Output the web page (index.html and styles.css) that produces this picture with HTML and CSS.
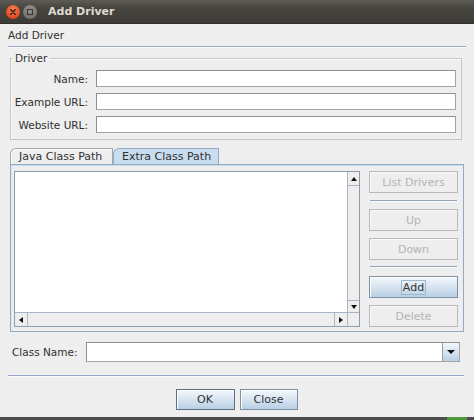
FILE: index.html
```
<!DOCTYPE html>
<html lang="en">
<head>
  <meta charset="UTF-8" />
  <title>Add Driver</title>
  <link rel="stylesheet" href="styles.css">
</head>
<body>

  <div class="window">
    <div class="titlebar">
      <span class="wbtn wbtn-close">
        <svg width="14" height="14" viewBox="0 0 14 14"><path d="M4.8 4.8 L9.2 9.2 M9.2 4.8 L4.8 9.2" stroke="#3b1a10" stroke-width="1.6" stroke-linecap="round"/></svg>
      </span>
      <span class="wbtn wbtn-min">
        <svg width="14" height="14" viewBox="0 0 14 14"><rect x="4.5" y="4.5" width="5" height="5" fill="none" stroke="#3a3936" stroke-width="1.2"/></svg>
      </span>
      <span class="title">Add Driver</span>
    </div>

    <div class="content">
      <div class="heading">Add Driver</div>
      <div class="sep"></div>

      <fieldset class="group">
        <legend>Driver</legend>
        <div class="form-row">
          <label>Name:</label>
          <div class="field"></div>
        </div>
        <div class="form-row">
          <label>Example URL:</label>
          <div class="field"></div>
        </div>
        <div class="form-row">
          <label>Website URL:</label>
          <div class="field"></div>
        </div>
      </fieldset>

      <div class="tabs">
        <div class="tab tab-java">Java Class Path</div>
        <div class="tab tab-extra tab-active">Extra Class Path</div>
      </div>
      <div class="tab-panel">
        <div class="scroll-pane">
          <div class="list"></div>
          <div class="vbar">
            <div class="arrow-btn vbtn-up"><span class="tri tri-up"></span></div>
            <div class="track"></div>
            <div class="arrow-btn vbtn-down"><span class="tri tri-down"></span></div>
          </div>
          <div class="hbar">
            <div class="arrow-btn hbtn-left"><span class="tri tri-left"></span></div>
            <div class="track"></div>
            <div class="arrow-btn hbtn-right"><span class="tri tri-right"></span></div>
          </div>
          <div class="corner"></div>
        </div>

        <div class="side">
          <button class="btn" disabled>List Drivers</button>
          <div class="side-sep sep-a"></div>
          <button class="btn" disabled>Up</button>
          <button class="btn btn-gap" disabled>Down</button>
          <div class="side-sep sep-b"></div>
          <button class="btn btn-on"><span class="focus">Add</span></button>
          <button class="btn btn-gap" disabled>Delete</button>
        </div>
      </div>

      <div class="class-row">
        <label>Class Name:</label>
        <div class="combo">
          <div class="combo-text"></div>
          <div class="combo-btn"><span class="tri tri-down"></span></div>
        </div>
      </div>

      <div class="sep sep-bottom"></div>

      <div class="actions">
        <button class="btn btn-on btn-default">OK</button>
        <button class="btn btn-on">Close</button>
      </div>
    </div>

    <div class="taskbar"><span class="task-green"></span></div>
  </div>

</body>
</html>
```

FILE: styles.css
```
body {
  margin: 0;
  font-family: 'DejaVu Sans', sans-serif;
  font-size: 10.5px;
  color: #303030;
  background: #eeeeee;
}

.window {
  width: 474px;
  height: 420px;
  display: flex;
  flex-direction: column;
  background: #eeeeee;
  overflow: hidden;
}

/* title bar */
.titlebar {
  height: 24px;
  flex: none;
  display: flex;
  align-items: center;
  padding-left: 6px;
  background: linear-gradient(#5c5b56 0, #46453f 35%, #3c3b37 100%);
  border-bottom: 1px solid #2f2e2b;
  box-sizing: border-box;
}

.wbtn {
  width: 14px;
  height: 14px;
  border-radius: 50%;
  display: flex;
  margin-right: 3px;
}

.wbtn-close {
  background: radial-gradient(circle at 50% 35%, #f7845c, #e0491f 70%, #b8380f);
}

.wbtn-min {
  background: radial-gradient(circle at 50% 35%, #9a9893, #77756f 70%, #5e5c57);
}

.title {
  margin-left: 8px;
  font-weight: bold;
  font-size: 11px;
  color: #dfdbd2;
}

/* body */
.content {
  padding: 0 8px;
  display: flex;
  flex-direction: column;
}

.heading {
  height: 22px;
  line-height: 22px;
}

.sep {
  height: 1px;
  background: #97a6c4;
  border-bottom: 1px solid #fafafa;
}

.group {
  margin: 4px 4px 0 2px;
  padding: 6px 5px 6px 4px;
  border: 1px solid #c6c6c6;
  box-shadow: inset 1px 1px 0 #fbfbfb;
  min-width: 0;
}

.group legend {
  padding: 0 2px;
  margin-left: -2px;
  line-height: 12px;
}

.form-row {
  display: flex;
  align-items: center;
  height: 17px;
  margin-bottom: 6px;
}

.form-row:last-child {
  margin-bottom: 0;
}

.form-row label {
  width: 73px;
  white-space: nowrap;
  display: flex;
  justify-content: flex-end;
  margin-right: 8px;
}

.field {
  flex: 1;
  height: 17px;
  box-sizing: border-box;
  background: #fff;
  border: 1px solid #a4a4a4;
  border-top-color: #8e8e8e;
  border-left-color: #8e8e8e;
}

/* tabs */
.tabs {
  display: flex;
  margin: 8px 0 0 2px;
  height: 16px;
  position: relative;
  z-index: 1;
}

.tab {
  box-sizing: border-box;
  padding-left: 8px;
  font-size: 11px;
  line-height: 15px;
  white-space: nowrap;
  border: 1px solid #a6a6a6;
  border-bottom: none;
  border-top-left-radius: 6px;
  background: #eeeeee;
  box-shadow: inset 1px 1px 0 #fbfbfb;
}

.tab-java {
  width: 103px;
}

.tab-extra {
  width: 106px;
}

.tab-active {
  background: #c9ddf1;
  border-color: #94a9c4;
  height: 16px;
  box-shadow: none;
}

.tab-panel {
  margin: 0 2px;
  height: 168px;
  box-sizing: border-box;
  border: 1px solid #94a9c4;
  box-shadow: inset 0 1px 0 #c9ddf1, inset 1px 0 0 #dde8f4;
  padding: 6px 5px 3px 3px;
  display: flex;
}

.scroll-pane {
  width: 346px;
  height: 156px;
  box-sizing: border-box;
  border: 1px solid #8c9bb0;
  display: grid;
  grid-template-columns: 1fr 12px;
  grid-template-rows: 1fr 14px;
}

.list {
  background: #fff;
}

.vbar {
  display: flex;
  flex-direction: column;
  border-left: 1px solid #a9b5c4;
  background: #eeeeee;
}

.hbar {
  display: flex;
  border-top: 1px solid #a9b5c4;
  background: #eeeeee;
}

.track {
  flex: 1;
}

.arrow-btn {
  display: flex;
  align-items: center;
  justify-content: center;
  background: #eeeeee;
}

.vbtn-up {
  height: 13px;
  border-bottom: 1px solid #a9b5c4;
}

.vbtn-down {
  height: 11px;
  border-top: 1px solid #a9b5c4;
}

.hbtn-left {
  width: 12px;
  border-right: 1px solid #a9b5c4;
}

.hbtn-right {
  width: 12px;
  border-left: 1px solid #a9b5c4;
}

.corner {
  border-left: 1px solid #a9b5c4;
  border-top: 1px solid #a9b5c4;
  background: #eeeeee;
}

.tri {
  width: 0;
  height: 0;
}

.tri-up {
  border-left: 3.5px solid transparent;
  border-right: 3.5px solid transparent;
  border-bottom: 4px solid #111;
}

.tri-down {
  border-left: 3.5px solid transparent;
  border-right: 3.5px solid transparent;
  border-top: 4px solid #111;
}

.tri-left {
  border-top: 3.5px solid transparent;
  border-bottom: 3.5px solid transparent;
  border-right: 4px solid #111;
}

.tri-right {
  border-top: 3.5px solid transparent;
  border-bottom: 3.5px solid transparent;
  border-left: 4px solid #111;
}

/* side buttons */
.side {
  margin-left: 9px;
  width: 89px;
  display: flex;
  flex-direction: column;
}

.btn {
  font-family: inherit;
  font-size: 11px;
  height: 22px;
  padding: 0;
  box-sizing: border-box;
  border: 1px solid #b9b9b9;
  background: #eeeeee;
  color: #b4b4b4;
  border-radius: 0;
  box-shadow: inset 1px 1px 0 #f8f8f8;
}

.btn-gap {
  margin-top: 7px;
}

.btn-on {
  color: #333;
  border-color: #7f8fa3;
  background: linear-gradient(#f3f7fb 0, #dde8f3 40%, #b9cfe5 100%);
  box-shadow: inset 1px 1px 0 #ffffff;
}

.btn-default {
  border-color: #5f6f82;
}

.focus {
  border: 1px solid #9fb5ce;
  padding: 0 1px;
}

.side-sep {
  height: 1px;
  margin: 0 1px;
  background: #95a3b6;
  border-bottom: 1px solid #fafafa;
}

.sep-a {
  margin-top: 7px;
  margin-bottom: 7px;
}

.sep-b {
  margin-top: 6px;
  margin-bottom: 8px;
}

/* class name */
.class-row {
  display: flex;
  align-items: center;
  margin-top: 10px;
  height: 20px;
  padding: 0 6px 0 4px;
}

.class-row label {
  width: 74px;
  white-space: nowrap;
}

.combo {
  flex: 1;
  height: 20px;
  box-sizing: border-box;
  display: flex;
  border: 1px solid #8f8f8f;
  border-right-color: #a4a4a4;
  border-bottom-color: #a4a4a4;
  background: #fff;
}

.combo-text {
  flex: 1;
}

.combo-btn {
  width: 16px;
  display: flex;
  align-items: center;
  justify-content: center;
  border-left: 1px solid #8f9fb3;
  background: linear-gradient(#f3f7fb 0, #dde8f3 40%, #b9cfe5 100%);
}

.combo-btn .tri-down {
  border-left-width: 4px;
  border-right-width: 4px;
  border-top-width: 4px;
}

.sep-bottom {
  margin-top: 13px;
  margin-right: 2px;
}

.actions {
  display: flex;
  justify-content: center;
  gap: 5px;
  margin-top: 12px;
  padding-right: 1px;
}

.actions .btn {
  height: 21px;
  width: 59px;
}

.actions .btn + .btn {
  width: 58px;
}

.taskbar {
  margin-top: auto;
  height: 3px;
  background: #4d4d4b;
  display: flex;
  justify-content: flex-end;
}

.task-green {
  width: 20px;
  margin-right: 7px;
  background: #4c9a3c;
}
```
